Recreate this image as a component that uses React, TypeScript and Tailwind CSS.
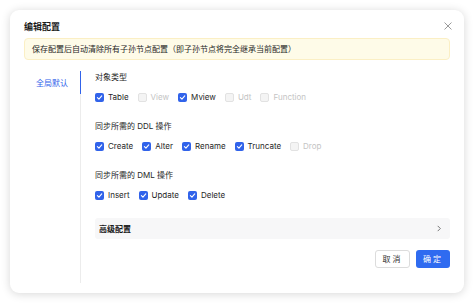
import React from 'react';

const font = { fontFamily: 'Inter, "Noto Sans CJK SC", sans-serif' };

interface Option {
  label: string;
  checked: boolean;
  disabled?: boolean;
}

const objectTypes: Option[] = [
  { label: 'Table', checked: true },
  { label: 'View', checked: false, disabled: true },
  { label: 'Mview', checked: true },
  { label: 'Udt', checked: false, disabled: true },
  { label: 'Function', checked: false, disabled: true },
];

const ddlOps: Option[] = [
  { label: 'Create', checked: true },
  { label: 'Alter', checked: true },
  { label: 'Rename', checked: true },
  { label: 'Truncate', checked: true },
  { label: 'Drop', checked: false, disabled: true },
];

const dmlOps: Option[] = [
  { label: 'Insert', checked: true },
  { label: 'Update', checked: true },
  { label: 'Delete', checked: true },
];

function Checkbox({ checked, disabled }: { checked: boolean; disabled?: boolean }) {
  if (checked) {
    return (
      <span className="flex h-[9px] w-[9px] items-center justify-center rounded-[2px] bg-[#3163ea]">
        <svg width="7" height="7" viewBox="0 0 10 10" fill="none">
          <path d="M2 5.2L4.2 7.3L8.2 2.8" stroke="white" strokeWidth="1.6" strokeLinecap="round" strokeLinejoin="round" />
        </svg>
      </span>
    );
  }
  return (
    <span
      className={
        disabled
          ? 'h-[9px] w-[9px] rounded-[2px] border border-[#e2e2e2] bg-[#f4f4f4]'
          : 'h-[9px] w-[9px] rounded-[2px] border border-[#cfcfcf] bg-white'
      }
    />
  );
}

function CheckRow({ options }: { options: Option[] }) {
  return (
    <div className="mt-[8px] flex h-[12px] items-center gap-[9px]">
      {options.map((o) => (
        <label key={o.label} className="flex items-center gap-[4px]">
          <Checkbox checked={o.checked} disabled={o.disabled} />
          <span className={o.disabled ? 'text-[#c4c4c4]' : 'text-[#1f1f1f]'}>{o.label}</span>
        </label>
      ))}
    </div>
  );
}

export default function App() {
  return (
    <div className="h-[304px] w-[474px] overflow-hidden bg-white pl-[10px] pt-[10px]" style={font}>
      <div className="flex h-[283px] w-[454px] flex-col rounded-[9px] bg-white px-[14px] pt-[10px] shadow-[0_1px_10px_rgba(0,0,0,0.16)]">
        <div className="flex h-[14px] items-center justify-between">
          <h2 className="text-[9px] font-bold leading-[14px] text-[#1a1a1a]">编辑配置</h2>
          <svg width="8" height="8" viewBox="0 0 10 10" className="-mr-[2px] -mt-[3px]">
            <path d="M1 1L9 9M9 1L1 9" stroke="#8c8c8c" strokeWidth="1.1" strokeLinecap="round" />
          </svg>
        </div>

        <div className="mt-[4px] flex h-[22px] items-center rounded-[4px] border border-[#fbefc4] bg-[#fefbe8] px-[7px] text-[8px] text-[#262626]">
          保存配置后自动清除所有子孙节点配置（即子孙节点将完全继承当前配置）
        </div>

        <div className="mt-[11px] flex h-[212px] text-[8px] leading-[12px]">
          <div className="w-[57px] border-r border-[#ececec]">
            <div className="-mr-px flex h-[23px] items-center justify-center border-r-[1.5px] border-[#3163ea] text-[#3163ea]">
              全局默认
            </div>
          </div>

          <div className="flex flex-1 flex-col pl-[14px]">
            <div className="h-[12px] text-[#262626]">对象类型</div>
            <CheckRow options={objectTypes} />

            <div className="mt-[17px] h-[12px] text-[#262626]">同步所需的 DDL 操作</div>
            <CheckRow options={ddlOps} />

            <div className="mt-[17px] h-[12px] text-[#262626]">同步所需的 DML 操作</div>
            <CheckRow options={dmlOps} />

            <div className="mt-[17px] flex h-[21px] items-center justify-between rounded-[3px] bg-[#f7f7f8] pl-[4px] pr-[8px]">
              <span className="font-bold text-[#1a1a1a]">高级配置</span>
              <svg width="6" height="7" viewBox="0 0 6 8">
                <path d="M1.5 1L4.5 4L1.5 7" stroke="#555" strokeWidth="0.9" fill="none" />
              </svg>
            </div>

            <div className="mt-[11px] flex justify-end gap-[6px]">
              <button className="flex h-[18px] w-[35px] items-center justify-center rounded-[3px] border border-[#dcdcdc] bg-white text-[8px] tracking-[2px] text-[#333]">
                取消
              </button>
              <button className="flex h-[18px] w-[34px] items-center justify-center rounded-[3px] bg-[#2f6bf0] text-[8px] tracking-[2px] text-white">
                确定
              </button>
            </div>
          </div>
        </div>
      </div>
    </div>
  );
}
